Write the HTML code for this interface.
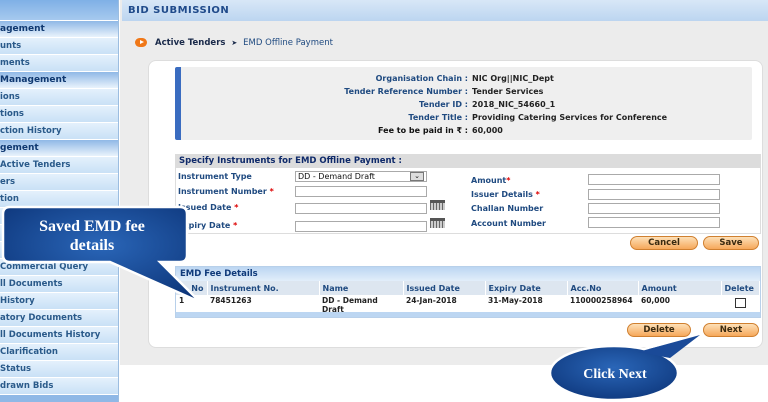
<!DOCTYPE html>
<html><head><meta charset="utf-8"><style>
*{margin:0;padding:0;box-sizing:border-box}
html,body{width:768px;height:402px;overflow:hidden}
body{background:#fff;font-family:"DejaVu Sans",Verdana,sans-serif;font-size:8px;color:#1a3a6a;position:relative}
.a{position:absolute}
.sb{left:0;top:0;width:119px;height:402px;background:#bcd7f0;border-right:1px solid #9cbde0;overflow:hidden}
.it{position:absolute;left:0;width:118px;height:17px;background:linear-gradient(#e4f1fc,#c9e1f6);border-bottom:1px solid #fff;font-weight:bold;font-size:8.5px;color:#2a5a8a;padding:3px 0 0 0;white-space:nowrap;overflow:hidden}
.hd{background:linear-gradient(#8fb8e6,#e9f3fc);color:#0f3870;font-size:9px}
.lb{position:absolute;font-weight:bold;color:#1f4a80;white-space:nowrap}
.in{position:absolute;height:11px;background:#fff;border:1px solid #aaa}
.btn{position:absolute;height:14px;border-radius:8px;background:linear-gradient(#fde0b8,#f6a85a);border:1px solid #d08030;font-weight:bold;color:#3a2a10;text-align:center;line-height:12px;font-size:8.5px}
.st{color:#d00}
td{font-weight:bold;padding:1px 3px;vertical-align:top;font-size:7.5px;color:#222}
th{font-weight:bold;text-align:left;padding:0 3px;font-size:8px;color:#1f4a80;background:#dde6f0;border-right:1px solid #fff;height:14px}
</style></head><body>
<div class="a sb">
<div class="it" style="top:0;height:21px;background:linear-gradient(#7fb0e6,#a6c9ee)"></div>
<div class="it hd" style="top:21px">agement</div>
<div class="it" style="top:38px">unts</div>
<div class="it" style="top:55px">ments</div>
<div class="it hd" style="top:72px">Management</div>
<div class="it" style="top:89px">ions</div>
<div class="it" style="top:106px">tions</div>
<div class="it" style="top:123px">ction History</div>
<div class="it hd" style="top:140px">gement</div>
<div class="it" style="top:157px">Active Tenders</div>
<div class="it" style="top:174px">ers</div>
<div class="it" style="top:191px">tion</div>
<div class="it" style="top:208px"></div>
<div class="it" style="top:225px"></div>
<div class="it" style="top:242px"></div>
<div class="it" style="top:259px">Commercial Query</div>
<div class="it" style="top:276px">ll Documents</div>
<div class="it" style="top:293px">History</div>
<div class="it" style="top:310px">atory Documents</div>
<div class="it" style="top:327px">ll Documents History</div>
<div class="it" style="top:344px">Clarification</div>
<div class="it" style="top:361px">Status</div>
<div class="it" style="top:378px">drawn Bids</div>
<div class="it" style="top:395px;background:#8fb8e6"></div>
</div>
<div class="a" style="left:120px;top:0;width:648px;height:365px;background:#ececec"></div>
<div class="a" style="left:122px;top:0;width:646px;height:21px;background:linear-gradient(#d8e7f7,#bcd5f0);font-weight:bold;font-size:10px;color:#1f4a8a;padding:5px 0 0 6px;letter-spacing:.5px">BID SUBMISSION</div>
<div class="a" style="left:135px;top:38px;width:12px;height:9px;border-radius:5px;background:#f07818"></div>
<div class="a" style="left:140px;top:40px;border-left:4px solid #fff;border-top:2.5px solid transparent;border-bottom:2.5px solid transparent"></div>
<div class="a" style="left:155px;top:38px;font-weight:bold;font-size:8.5px;color:#1a2a4a">Active Tenders &nbsp;<span style="font-size:7px">&#10148;</span>&nbsp; <span style="font-weight:normal;color:#1f4a80">EMD Offline Payment</span></div>
<div class="a" style="left:148px;top:60px;width:615px;height:288px;background:#fff;border-radius:8px;border:1px solid #ddd"></div>
<div class="a" style="left:175px;top:67px;width:577px;height:73px;background:#efefef;border-left:6px solid #3a6cc0;border-radius:2px"></div>
<div class="a" style="left:180px;top:72px;width:288px;text-align:right;line-height:13px;font-weight:bold;color:#1f4a80">Organisation Chain :<br>Tender Reference Number :<br>Tender ID :<br>Tender Title :<br><span style="color:#111">Fee to be paid in &#8377; :</span></div>
<div class="a" style="left:472px;top:72px;line-height:13px;font-weight:bold;color:#222">NIC Org||NIC_Dept<br>Tender Services<br>2018_NIC_54660_1<br>Providing Catering Services for Conference<br>60,000</div>
<div class="a" style="left:175px;top:154px;width:586px;height:80px;border:1px solid #ddd"></div>
<div class="a" style="left:175px;top:154px;width:586px;height:14px;background:#dcdcdc;font-weight:bold;color:#0f2a6a;padding:2px 0 0 4px;font-size:8.5px">Specify Instruments for EMD Offline Payment :</div>
<div class="lb" style="left:178px;top:172px">Instrument Type</div>
<div class="lb" style="left:178px;top:187px">Instrument Number <span class="st">*</span></div>
<div class="lb" style="left:178px;top:203px">Issued Date <span class="st">*</span></div>
<div class="lb" style="left:178px;top:221px">Expiry Date <span class="st">*</span></div>
<div class="in" style="left:295px;top:171px;width:132px;font-size:8px;padding-left:2px;line-height:9px;color:#111">DD - Demand Draft<span style="position:absolute;right:2px;top:0;width:14px;height:9px;border:1px solid #777;background:#ddd;font-size:7px;line-height:6px;text-align:center">&#8964;</span></div>
<div class="in" style="left:295px;top:186px;width:132px"></div>
<div class="in" style="left:295px;top:203px;width:132px"></div>
<div class="in" style="left:295px;top:221px;width:132px"></div>
<div class="a" style="left:430px;top:200px;width:15px;height:10px;background:repeating-linear-gradient(90deg,#666 0 1px,#ccc 1px 3px);border-top:3px solid #555"></div>
<div class="a" style="left:430px;top:218px;width:15px;height:10px;background:repeating-linear-gradient(90deg,#666 0 1px,#ccc 1px 3px);border-top:3px solid #555"></div>
<div class="lb" style="left:471px;top:176px">Amount<span class="st">*</span></div>
<div class="lb" style="left:471px;top:190px">Issuer Details <span class="st">*</span></div>
<div class="lb" style="left:471px;top:204px">Challan Number</div>
<div class="lb" style="left:471px;top:219px">Account Number</div>
<div class="in" style="left:588px;top:174px;width:132px"></div>
<div class="in" style="left:588px;top:189px;width:132px"></div>
<div class="in" style="left:588px;top:203px;width:132px"></div>
<div class="in" style="left:588px;top:217px;width:132px"></div>
<div class="btn" style="left:630px;top:236px;width:68px">Cancel</div>
<div class="btn" style="left:703px;top:236px;width:56px">Save</div>
<div class="a" style="left:175px;top:266px;width:586px;height:52px;background:#fff;border:1px solid #b8d0ea">
<div style="height:14px;background:linear-gradient(#bcd6f2,#e2eefa);font-weight:bold;color:#0f3a7a;font-size:8.5px;padding:2px 0 0 4px">EMD Fee Details</div>
<table style="border-collapse:collapse;width:584px">
<tr><th style="width:31px;text-align:right">No</th><th style="width:112px">Instrument No.</th><th style="width:84px">Name</th><th style="width:82px">Issued Date</th><th style="width:82px">Expiry Date</th><th style="width:71px">Acc.No</th><th style="width:83px">Amount</th><th>Delete</th></tr>
<tr><td>1</td><td>78451263</td><td>DD - Demand<br>Draft</td><td>24-Jan-2018</td><td>31-May-2018</td><td>110000258964</td><td>60,000</td><td style="text-align:center"><span style="display:inline-block;width:11px;height:10px;border:1px solid #333;margin-top:2px"></span></td></tr>
</table>
<div style="position:absolute;left:0;bottom:0;width:584px;height:5px;background:#bcd6f2"></div>
</div>
<div class="btn" style="left:627px;top:323px;width:64px">Delete</div>
<div class="btn" style="left:703px;top:323px;width:56px">Next</div>
<svg class="a" style="left:0;top:200px" width="768" height="202">
<defs><radialGradient id="g" cx="50%" cy="40%" r="70%"><stop offset="0" stop-color="#2a66b8"/><stop offset="1" stop-color="#0c3478"/></radialGradient></defs>
<path d="M10 7 H180 Q187 7 187 14 V55 Q187 62 180 62 H160 L200 102 L110 62 H10 Q3 62 3 55 V14 Q3 7 10 7 Z" fill="url(#g)" stroke="#fff" stroke-width="2.5"/>
<text x="92" y="31" fill="#fff" font-family="Liberation Serif,serif" font-weight="bold" font-size="16" text-anchor="middle">Saved EMD fee</text>
<text x="92" y="50" fill="#fff" font-family="Liberation Serif,serif" font-weight="bold" font-size="16" text-anchor="middle">details</text>
<path d="M640 150 L702 134 L668 156 Z" fill="url(#g)" stroke="#fff" stroke-width="2.5" stroke-linejoin="round"/>
<ellipse cx="614" cy="173" rx="64" ry="27" fill="url(#g)" stroke="#fff" stroke-width="2.5"/>
<path d="M638 152 L700 135 L670 158 Z" fill="#1a4a98"/>
<text x="615" y="178" fill="#fff" font-family="Liberation Serif,serif" font-weight="bold" font-size="14" text-anchor="middle">Click Next</text>
</svg>
</body></html>
